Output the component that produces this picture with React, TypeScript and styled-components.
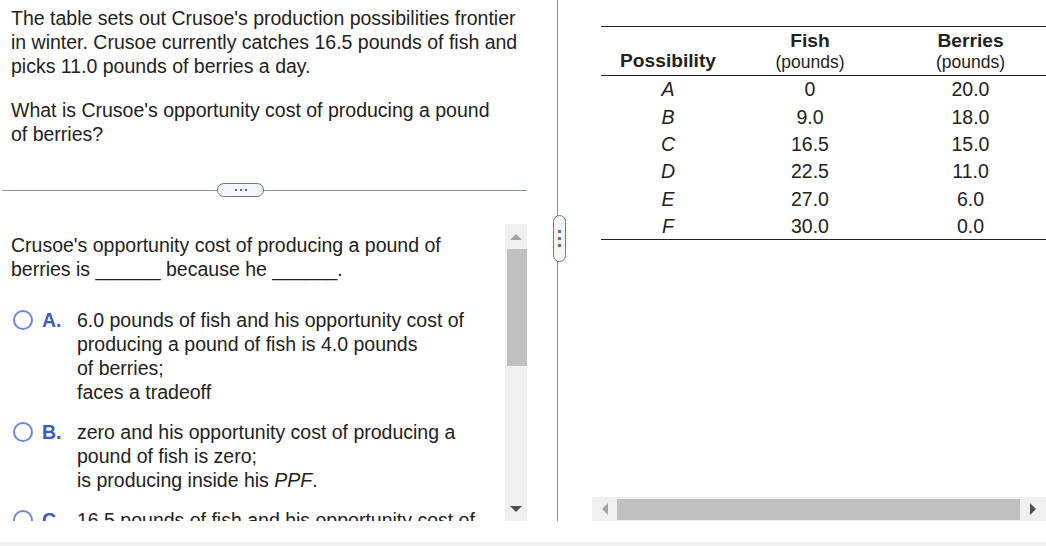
import React from "react";
import styled, { createGlobalStyle } from "styled-components";

const Global = createGlobalStyle`
  html, body { margin: 0; padding: 0; background: #fff; }
  body { font-family: "Liberation Sans", Arial, sans-serif; color: #222; }
`;

const Page = styled.div`
  width: 1046px;
  height: 546px;
  display: flex;
  flex-direction: column;
  overflow: hidden;
`;

const Body = styled.div`
  height: 542px;
  display: flex;
`;

const BottomStrip = styled.div`
  height: 4px;
  background: #f0f0f0;
`;

const LeftPane = styled.div`
  width: 527px;
  display: flex;
  flex-direction: column;
`;

const Question = styled.div`
  padding: 6px 0 0 11px;
  font-size: 19.5px;
  line-height: 24px;
  white-space: nowrap;
`;

const Para = styled.p<{ $gap?: number }>`
  margin: ${(p) => p.$gap ?? 0}px 0 0 0;
`;

const SeparatorRow = styled.div`
  margin-top: 37px;
  height: 14px;
  padding-left: 2px;
  display: flex;
  align-items: center;
`;

const SepLine = styled.div<{ $w?: number }>`
  height: 1px;
  background: #8a929e;
  ${(p) => (p.$w ? `width: ${p.$w}px;` : "flex: 1;")}
`;

const Pill = styled.div`
  width: 45px;
  height: 12px;
  border: 1px solid #6f7886;
  border-radius: 8px;
  background: #f4f6f9;
  display: flex;
  align-items: center;
  justify-content: center;
  gap: 3px;
`;

const Dot = styled.span`
  width: 2px;
  height: 2px;
  background: #3c4350;
  border-radius: 1px;
`;

const ScrollArea = styled.div`
  margin-top: 27px;
  height: 297px;
  display: flex;
`;

const ScrollContent = styled.div`
  flex: 1;
  overflow: hidden;
  padding-top: 9px;
  font-size: 19.5px;
  line-height: 24px;
  white-space: nowrap;
`;

const Intro = styled.p`
  margin: 0 0 0 11px;
`;

const Options = styled.div`
  margin-top: 27px;
  display: flex;
  flex-direction: column;
  gap: 16px;
`;

const Option = styled.div`
  display: flex;
  align-items: flex-start;
  padding-left: 13px;
`;

const Radio = styled.span`
  flex: none;
  box-sizing: border-box;
  width: 20px;
  height: 20px;
  margin-top: 2px;
  border: 2px solid #6a88e0;
  border-radius: 50%;
  background: #fff;
`;

const Letter = styled.span`
  flex: none;
  width: 35px;
  margin-left: 9px;
  font-weight: bold;
  color: #3b5ac6;
`;

const OptionText = styled.div``;

const VScroll = styled.div`
  width: 22px;
  flex: none;
  background: #f0f0f0;
  display: flex;
  flex-direction: column;
  align-items: center;
`;

const ArrowBox = styled.div<{ $h: number }>`
  height: ${(p) => p.$h}px;
  width: 100%;
  display: flex;
  align-items: center;
  justify-content: center;
`;

const VThumb = styled.div`
  width: 20px;
  margin-left: 2px;
  height: 117px;
  background: #c0c0c0;
`;

const VSpacer = styled.div`
  flex: 1;
`;

const DividerCol = styled.div`
  width: 63px;
  position: relative;
  display: flex;
  justify-content: center;
`;

const DividerLine = styled.div`
  width: 1px;
  height: 521px;
  margin-left: -3px;
  background: #8a929e;
`;

const Handle = styled.div`
  position: absolute;
  top: 215px;
  left: 26px;
  box-sizing: border-box;
  width: 13px;
  height: 47px;
  border: 1px solid #6f7886;
  border-radius: 7px;
  background: #f4f6f9;
  display: flex;
  flex-direction: column;
  align-items: center;
  justify-content: center;
  gap: 4px;
`;

const HDot = styled.span`
  width: 3px;
  height: 3px;
  background: linear-gradient(90deg, #c0552e 50%, #2e7fd0 50%);
`;

const RightPane = styled.div`
  flex: 1;
  display: flex;
  flex-direction: column;
  overflow: hidden;
`;

const TableWrap = styled.div`
  margin: 26px 0 0 11px;
`;

const Table = styled.table`
  border-collapse: collapse;
  width: 455px;
  border-top: 1px solid #222;
  border-bottom: 1px solid #222;
  font-size: 19.5px;
`;

const HeadCell = styled.th<{ $w: number }>`
  width: ${(p) => p.$w}px;
  padding: 0 0 3px 0;
  vertical-align: bottom;
  text-align: center;
  border-bottom: 1px solid #222;
  height: 45px;
`;

const HeadMain = styled.div`
  font-weight: bold;
  font-size: 19.2px;
  line-height: 22px;
`;

const HeadSub = styled.div`
  font-weight: normal;
  font-size: 17.5px;
  line-height: 20px;
`;

const Row = styled.tr`
  height: 27.4px;
`;

const Cell = styled.td<{ $italic?: boolean }>`
  padding: 0;
  text-align: center;
  line-height: 20px;
  font-style: ${(p) => (p.$italic ? "italic" : "normal")};
`;

const HSpacer = styled.div`
  flex: 1;
`;

const HScroll = styled.div`
  margin: 0 0 21px 2px;
  height: 24px;
  background: #f0f0f0;
  display: flex;
  align-items: center;
`;

const HArrowBox = styled.div<{ $w: number }>`
  width: ${(p) => p.$w}px;
  height: 100%;
  display: flex;
  align-items: center;
  justify-content: center;
`;

const HThumb = styled.div`
  width: 403px;
  height: 21px;
  background: #c0c0c0;
`;

const Tri = ({ dir, color }: { dir: "up" | "down" | "left" | "right"; color: string }) => {
  const pts: Record<string, string> = {
    up: "0,6 6,0 12,6",
    down: "0,0 12,0 6,6",
    left: "6,0 6,12 0,6",
    right: "0,0 0,12 6,6",
  };
  const vertical = dir === "up" || dir === "down";
  return (
    <svg width={vertical ? 12 : 6} height={vertical ? 6 : 12} viewBox={vertical ? "0 0 12 6" : "0 0 6 12"}>
      <polygon points={pts[dir]} fill={color} />
    </svg>
  );
};

const rows = [
  ["A", "0", "20.0"],
  ["B", "9.0", "18.0"],
  ["C", "16.5", "15.0"],
  ["D", "22.5", "11.0"],
  ["E", "27.0", "6.0"],
  ["F", "30.0", "0.0"],
];

export default function App() {
  return (
    <Page>
      <Global />
      <Body>
        <LeftPane>
          <Question>
            <Para>
              The table sets out Crusoe's production possibilities frontier
              <br />
              in winter. Crusoe currently catches 16.5 pounds of fish and
              <br />
              picks 11.0 pounds of berries a day.
            </Para>
            <Para $gap={20}>
              What is Crusoe's opportunity cost of producing a pound
              <br />
              of berries?
            </Para>
          </Question>
          <SeparatorRow>
            <SepLine $w={215} />
            <Pill>
              <Dot />
              <Dot />
              <Dot />
            </Pill>
            <SepLine />
          </SeparatorRow>
          <ScrollArea>
            <ScrollContent>
              <Intro>
                Crusoe's opportunity cost of producing a pound of
                <br />
                berries is ______ because he ______.
              </Intro>
              <Options>
                <Option>
                  <Radio />
                  <Letter>A.</Letter>
                  <OptionText>
                    6.0 pounds of fish and his opportunity cost of
                    <br />
                    producing a pound of fish is 4.0 pounds
                    <br />
                    of berries;
                    <br />
                    faces a tradeoff
                  </OptionText>
                </Option>
                <Option>
                  <Radio />
                  <Letter>B.</Letter>
                  <OptionText>
                    zero and his opportunity cost of producing a
                    <br />
                    pound of fish is zero;
                    <br />
                    is producing inside his <i>PPF</i>.
                  </OptionText>
                </Option>
                <Option>
                  <Radio />
                  <Letter>C.</Letter>
                  <OptionText>16.5 pounds of fish and his opportunity cost of</OptionText>
                </Option>
              </Options>
            </ScrollContent>
            <VScroll>
              <ArrowBox $h={25}>
                <Tri dir="up" color="#a3a3a3" />
              </ArrowBox>
              <VThumb />
              <VSpacer />
              <ArrowBox $h={24}>
                <Tri dir="down" color="#505050" />
              </ArrowBox>
            </VScroll>
          </ScrollArea>
        </LeftPane>
        <DividerCol>
          <DividerLine />
          <Handle>
            <HDot />
            <HDot />
            <HDot />
          </Handle>
        </DividerCol>
        <RightPane>
          <TableWrap>
            <Table>
              <thead>
                <tr>
                  <HeadCell $w={134}>
                    <HeadMain>Possibility</HeadMain>
                  </HeadCell>
                  <HeadCell $w={150}>
                    <HeadMain>Fish</HeadMain>
                    <HeadSub>(pounds)</HeadSub>
                  </HeadCell>
                  <HeadCell $w={171}>
                    <HeadMain>Berries</HeadMain>
                    <HeadSub>(pounds)</HeadSub>
                  </HeadCell>
                </tr>
              </thead>
              <tbody>
                {rows.map((r) => (
                  <Row key={r[0]}>
                    <Cell $italic>{r[0]}</Cell>
                    <Cell>{r[1]}</Cell>
                    <Cell>{r[2]}</Cell>
                  </Row>
                ))}
              </tbody>
            </Table>
          </TableWrap>
          <HSpacer />
          <HScroll>
            <HArrowBox $w={25}>
              <Tri dir="left" color="#a3a3a3" />
            </HArrowBox>
            <HThumb />
            <HSpacer />
            <HArrowBox $w={26}>
              <Tri dir="right" color="#505050" />
            </HArrowBox>
          </HScroll>
        </RightPane>
      </Body>
      <BottomStrip />
    </Page>
  );
}
